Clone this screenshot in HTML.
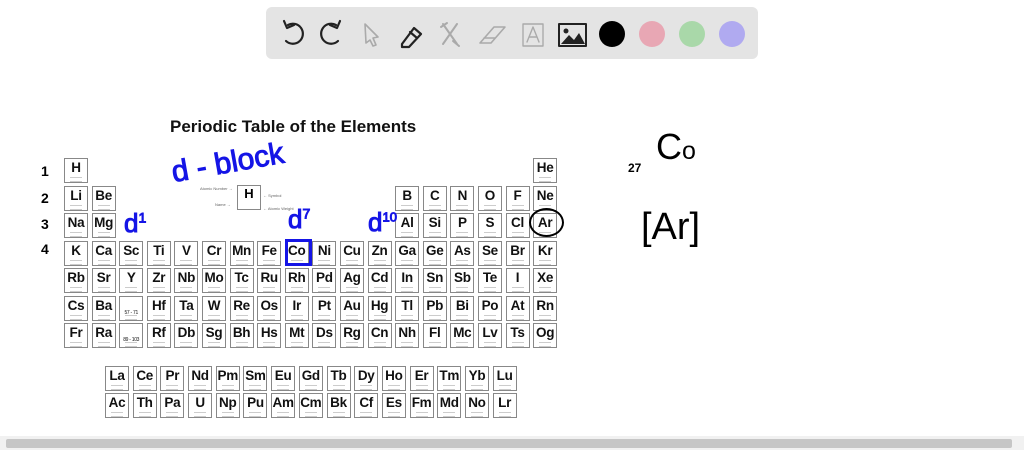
<!DOCTYPE html><html><head><meta charset="utf-8"><style>
*{margin:0;padding:0;box-sizing:border-box}
body{width:1024px;height:450px;background:#fff;position:relative;overflow:hidden;font-family:"Liberation Sans",sans-serif}
.tb{position:absolute;left:266px;top:7px;width:492px;height:52px;background:#e4e4e4;border-radius:6px}
.tb svg{position:absolute;left:0;top:0}
.pt{position:absolute;left:64px;top:158px;display:grid;grid-template-columns:repeat(18,24px);grid-auto-rows:25px;column-gap:3.6px;row-gap:2.5px}
.lb{position:absolute;left:105px;top:366px;display:grid;grid-template-columns:repeat(15,24px);grid-auto-rows:25px;column-gap:3.7px;row-gap:2px}
.pt div,.lb div{border:1px solid #888;background:#fff;font-weight:bold;font-size:13.5px;text-align:center;line-height:16px;padding-top:1px;position:relative;color:#111;letter-spacing:-0.3px}
.pt div::after,.lb div::after{content:"";position:absolute;left:5px;right:5px;top:18px;height:3px;border-top:1px solid #ccc;border-bottom:1px solid #ccc}
.h{position:absolute;color:#1515e6;font-family:"Liberation Sans",sans-serif}
.n{position:absolute;font-size:14px;font-weight:bold;color:#000}
</style></head><body>
<div class="tb">
<svg width="492" height="52" viewBox="0 0 492 52">
<g fill="none" stroke="#222" stroke-width="2.2" stroke-linecap="round" stroke-linejoin="round">
<path d="M22 18 A10 10 0 1 1 20 34"/><path d="M18 14 L21 21 L28 18"/>
<path d="M70 18 A10 10 0 1 0 72 34"/><path d="M74 14 L71 21 L64 18"/>
<path d="M99 17 L112 30 L107 31 L110 38 L107 39 L104 33 L100 36 Z" stroke="#aaa" stroke-width="1.6"/>
<path d="M136 37 L148 21 L155 27 L143 40 L136 40 Z M144 25 L151 31"/>
<path d="M177 17 L191 37 M191 17 L177 37 M175 20 L181 16 M187 34 L193 39" stroke="#aaa" stroke-width="2"/>
<path d="M214 36 L228 20 L239 20 L225 36 Z M218 31 L229 31" stroke="#aaa" stroke-width="1.6"/>
<rect x="257" y="17" width="20" height="22" stroke="#aaa" stroke-width="1.4"/>
<path d="M261 35 L267 20 L273 35 M263 30 L271 30" stroke="#aaa" stroke-width="1.4"/>
<rect x="293" y="17" width="27" height="22" stroke-width="2"/>
</g>
<circle cx="300" cy="24" r="2.5" fill="#222"/><path d="M295 37 L303 28 L308 33 L313 26 L319 37 Z" fill="#222"/>
<circle cx="346" cy="27" r="13" fill="#000"/>
<circle cx="386" cy="27" r="13" fill="#e8a7b4"/>
<circle cx="426" cy="27" r="13" fill="#a9d8a9"/>
<circle cx="466" cy="27" r="13" fill="#b0aaf0"/>
</svg></div>
<div style="position:absolute;left:170px;top:117px;font-size:17px;font-weight:bold;color:#111">Periodic Table of the Elements</div>
<div class="n" style="left:41px;top:163px">1</div><div class="n" style="left:41px;top:190px">2</div><div class="n" style="left:41px;top:216px">3</div><div class="n" style="left:41px;top:241px">4</div>
<div class="pt">
<div>H</div><div style="grid-column:18">He</div>
<div>Li</div><div>Be</div><div style="grid-column:13">B</div><div>C</div><div>N</div><div>O</div><div>F</div><div>Ne</div>
<div>Na</div><div>Mg</div><div style="grid-column:13">Al</div><div>Si</div><div>P</div><div>S</div><div>Cl</div><div>Ar</div>
<div>K</div><div>Ca</div><div>Sc</div><div>Ti</div><div>V</div><div>Cr</div><div>Mn</div><div>Fe</div><div>Co</div><div>Ni</div><div>Cu</div><div>Zn</div><div>Ga</div><div>Ge</div><div>As</div><div>Se</div><div>Br</div><div>Kr</div>
<div>Rb</div><div>Sr</div><div>Y</div><div>Zr</div><div>Nb</div><div>Mo</div><div>Tc</div><div>Ru</div><div>Rh</div><div>Pd</div><div>Ag</div><div>Cd</div><div>In</div><div>Sn</div><div>Sb</div><div>Te</div><div>I</div><div>Xe</div>
<div>Cs</div><div>Ba</div><div style="font-size:5px;font-weight:normal;padding-top:8px">57 - 71</div><div>Hf</div><div>Ta</div><div>W</div><div>Re</div><div>Os</div><div>Ir</div><div>Pt</div><div>Au</div><div>Hg</div><div>Tl</div><div>Pb</div><div>Bi</div><div>Po</div><div>At</div><div>Rn</div>
<div>Fr</div><div>Ra</div><div style="font-size:5px;font-weight:normal;padding-top:8px">89 - 103</div><div>Rf</div><div>Db</div><div>Sg</div><div>Bh</div><div>Hs</div><div>Mt</div><div>Ds</div><div>Rg</div><div>Cn</div><div>Nh</div><div>Fl</div><div>Mc</div><div>Lv</div><div>Ts</div><div>Og</div>
</div>
<div class="lb">
<div>La</div><div>Ce</div><div>Pr</div><div>Nd</div><div>Pm</div><div>Sm</div><div>Eu</div><div>Gd</div><div>Tb</div><div>Dy</div><div>Ho</div><div>Er</div><div>Tm</div><div>Yb</div><div>Lu</div>
<div>Ac</div><div>Th</div><div>Pa</div><div>U</div><div>Np</div><div>Pu</div><div>Am</div><div>Cm</div><div>Bk</div><div>Cf</div><div>Es</div><div>Fm</div><div>Md</div><div>No</div><div>Lr</div>
</div>
<div style="position:absolute;left:237px;top:185px;width:24px;height:25px;border:1px solid #888;background:#fff;font-weight:bold;font-size:13px;text-align:center;line-height:16px">H</div>
<div style="position:absolute;left:200px;top:186px;font-size:4px;color:#666">Atomic Number →</div>
<div style="position:absolute;left:215px;top:202px;font-size:4px;color:#666">Name →</div>
<div style="position:absolute;left:263px;top:193px;font-size:4px;color:#666">← Symbol</div>
<div style="position:absolute;left:263px;top:206px;font-size:4px;color:#666">← Atomic Weight</div>
<div class="h" style="left:175px;top:156px;font-size:30px;transform:rotate(-10deg);transform-origin:left bottom;-webkit-text-stroke:1px #1515e6">d - block</div>
<div class="h" style="left:124px;top:208px;font-size:26px;-webkit-text-stroke:1px #1515e6">d<sup style="font-size:14px">1</sup></div>
<div class="h" style="left:288px;top:204px;font-size:26px;-webkit-text-stroke:1px #1515e6">d<sup style="font-size:14px">7</sup></div>
<div class="h" style="left:368px;top:207px;font-size:26px;-webkit-text-stroke:1px #1515e6">d<sup style="font-size:13px">10</sup></div>
<div style="position:absolute;left:285px;top:239px;width:27px;height:27px;border:3px solid #1515e6"></div>
<div style="position:absolute;left:529px;top:208px;width:35px;height:29px;border:2.5px solid #000;border-radius:50%"></div>
<div style="position:absolute;left:656px;top:126px;font-size:36px;color:#000">C<span style="font-size:25px">o</span></div>
<div style="position:absolute;left:628px;top:161px;font-size:12px;font-weight:bold">27</div>
<div style="position:absolute;left:641px;top:206px;font-size:38px;color:#000">[Ar]</div>
<div style="position:absolute;left:0;top:436px;width:1024px;height:14px;background:#f1f1f1"></div>
<div style="position:absolute;left:6px;top:439px;width:1006px;height:9px;background:#c6c6c6;border-radius:2px"></div>
</body></html>
